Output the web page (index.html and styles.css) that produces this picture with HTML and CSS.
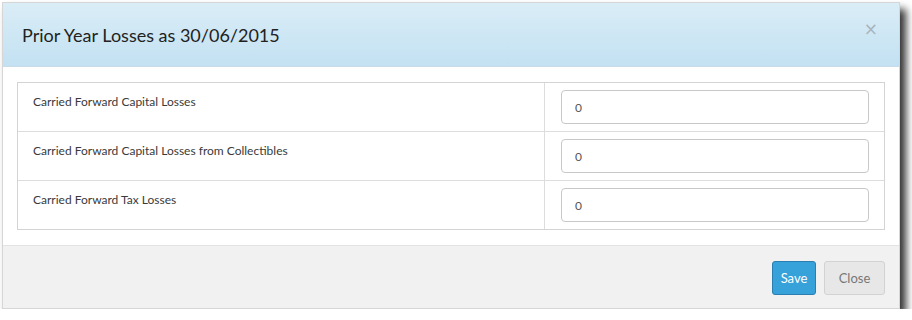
FILE: index.html
```html
<!DOCTYPE html>
<html>
<head>
<meta charset="utf-8">
<link rel="stylesheet" href="styles.css">
</head>
<body>
<div class="modal">
  <div class="modal-header">
    <h4 class="modal-title">Prior Year Losses as 30/06/2015</h4>
    <span class="close">&times;</span>
  </div>
  <div class="modal-body">
    <div class="grid">
      <div class="label">Carried Forward Capital Losses</div>
      <div class="field"><div class="input">0</div></div>
      <div class="label">Carried Forward Capital Losses from Collectibles</div>
      <div class="field"><div class="input">0</div></div>
      <div class="label last">Carried Forward Tax Losses</div>
      <div class="field last"><div class="input">0</div></div>
    </div>
  </div>
  <div class="modal-footer">
    <button class="btn btn-primary">Save</button>
    <button class="btn btn-default">Close</button>
  </div>
</div>
</body>
</html>
```
FILE: styles.css
```css
html, body {
  margin: 0;
  padding: 0;
  background: #ffffff;
}
body {
  padding: 2px 0 0 2px;
  font-family: Lato, "Open Sans", Arial, sans-serif;
}
.modal {
  width: 896px;
  border: 1px solid #d6d6d6;
  background: #fff;
  box-shadow: 6px 7px 8px rgba(0, 0, 0, 0.8);
}
.modal-header {
  height: 63px;
  display: flex;
  align-items: center;
  justify-content: space-between;
  padding: 0 21px 0 19px;
  background: linear-gradient(to bottom, #daedf7 0%, #c3e1f2 100%);
  border-bottom: 1px solid #c8dbe6;
}
.modal-title {
  margin: 0;
  font-size: 18px;
  font-weight: normal;
  color: #222;
}
.close {
  color: #a9b5bd;
  font-size: 17px;
  line-height: 1;
  margin-top: -10px;
  font-family: "DejaVu Sans", sans-serif;
}
.modal-body {
  padding: 15px 14px 15px 14px;
}
.grid {
  display: grid;
  grid-template-columns: 527px 1fr;
  border: 1px solid #d4d4d4;
}
.label {
  height: 49px;
  box-sizing: border-box;
  padding: 11px 15px 0 15px;
  font-size: 12px;
  color: #3a3a3a;
  border-right: 1px solid #dddddd;
  border-bottom: 1px solid #dddddd;
}
.field {
  height: 49px;
  box-sizing: border-box;
  padding: 7px 15px 0 16px;
  border-bottom: 1px solid #dddddd;
}
.label.last, .field.last {
  border-bottom: none;
  height: 48px;
}
.input {
  border: 1px solid #c8c8c8;
  border-radius: 4px;
  box-sizing: border-box;
  height: 34px;
  padding: 0 13px;
  display: flex;
  align-items: center;
  font-size: 12px;
  color: #555;
}
.modal-footer {
  background: #f1f1f1;
  border-top: 1px solid #e3e3e3;
  height: 63px;
  box-sizing: border-box;
  padding: 15px 14px 0 0;
  display: flex;
  align-items: flex-start;
  justify-content: flex-end;
  gap: 8px;
}
.btn {
  height: 34px;
  border-radius: 3px;
  font-family: Lato, "Open Sans", Arial, sans-serif;
  font-size: 13px;
  cursor: pointer;
  padding: 0;
}
.btn-primary {
  background: #36a2d9;
  border: 1px solid #2a7fb0;
  color: #fff;
  width: 44px;
}
.btn-default {
  background: #e7e7e7;
  border: 1px solid #d2d2d2;
  color: #777;
  width: 61px;
}
```
